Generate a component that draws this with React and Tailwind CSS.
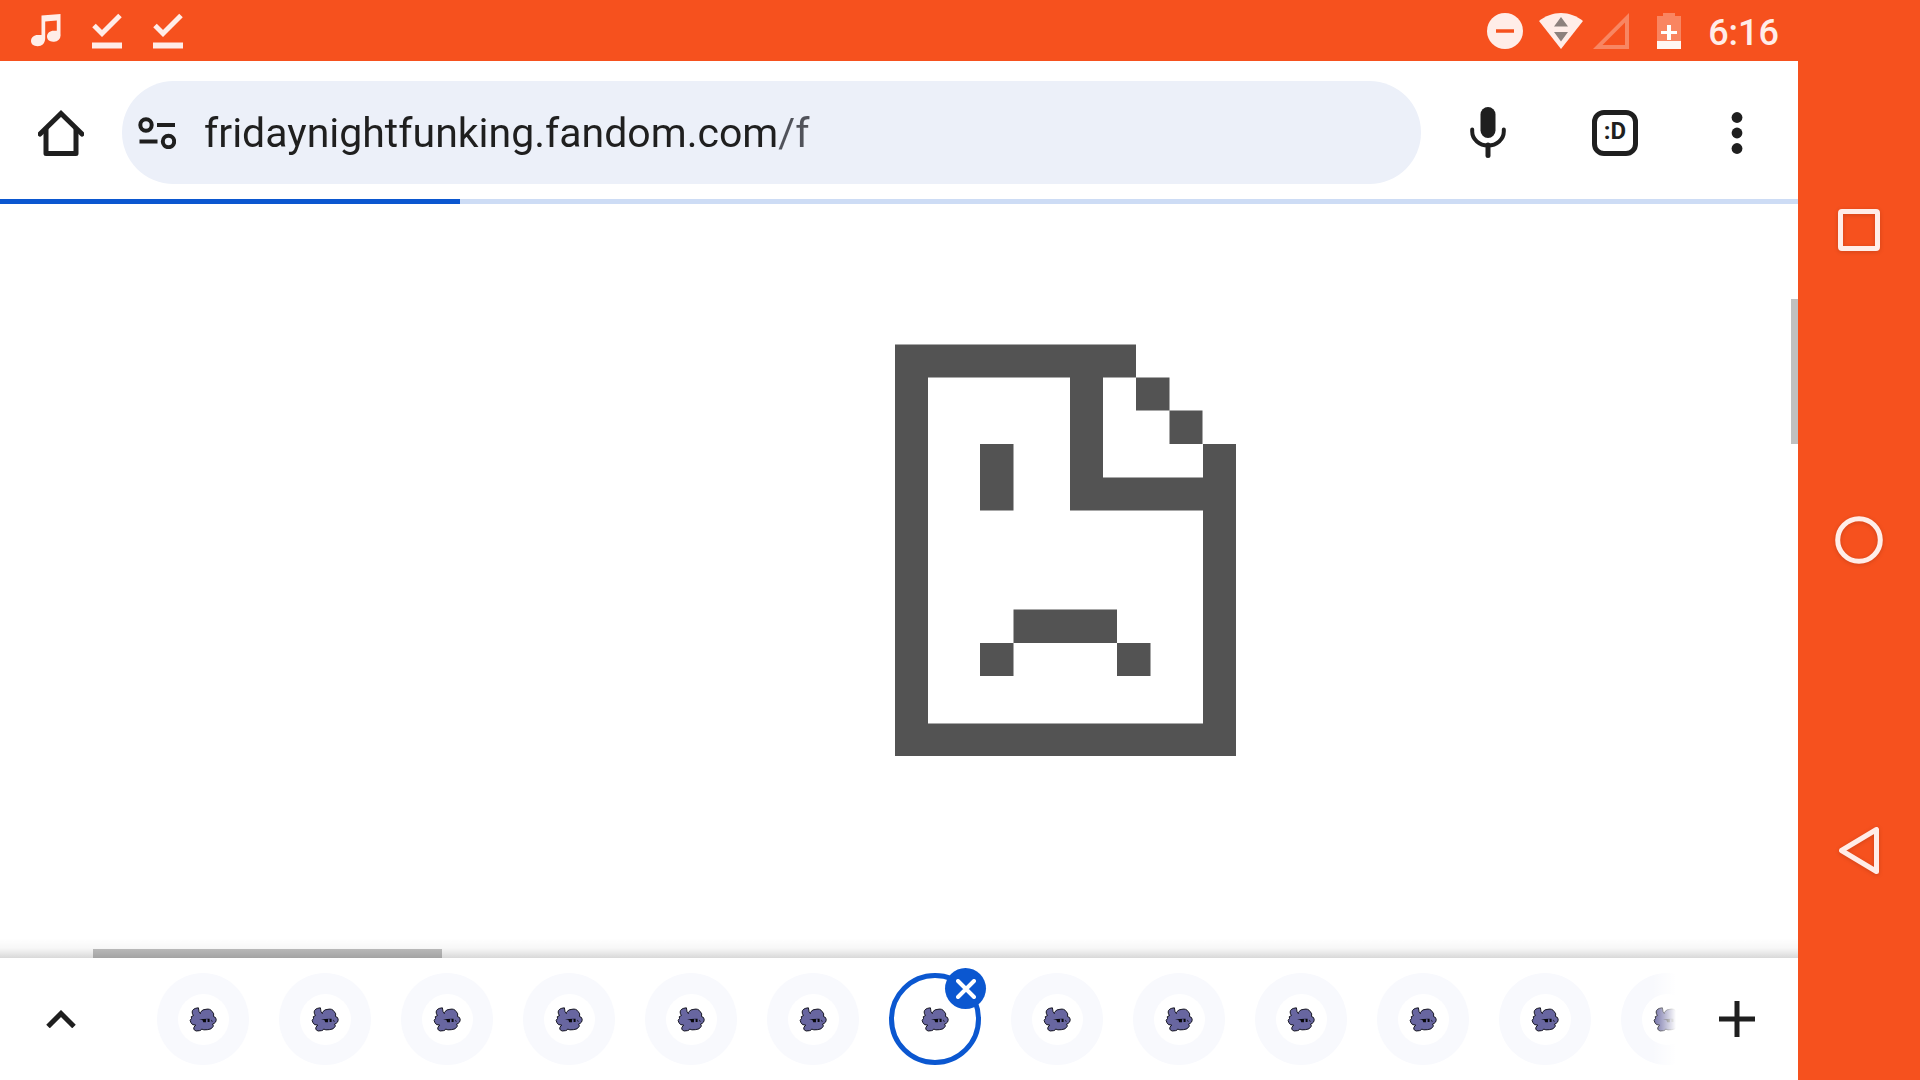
const TAB_COUNT = 13;
const ACTIVE_TAB = 6;
const LOAD_PROGRESS = 25.6;

function MusicIcon() {
  return (
    <svg viewBox="0 0 30 33" className="h-[33px] w-[30px]" fill="currentColor">
      <path d="M10.5 1.5 29.5 0v20a6.6 6.6 0 0 1-7.3 7.7c-4 0-6.2-2.2-6.2-5.2 0-3.5 3-5.8 6.6-5.8h3.2V6.6l-11.600 .9v16.700c0 5-3.2 8-7.6 8C2.400 32.200 0 30 0 27c0-3.600 3-6 6.600-6h3.900z" />
    </svg>
  );
}

function DownloadDoneIcon() {
  return (
    <svg viewBox="0 0 30 36" className="h-9 w-[30px]" fill="none" stroke="currentColor">
      <path d="M2 12.500 10 20.500 28 2.500" strokeWidth="5" />
      <path d="M0 32.500h30" strokeWidth="6" />
    </svg>
  );
}

function DoNotDisturbIcon() {
  return (
    <svg viewBox="0 0 36 36" className="size-9">
      <circle cx="18" cy="18" r="18" fill="#ffede8" />
      <path d="M9 18h18" stroke="#f6511e" strokeWidth="3.500" />
    </svg>
  );
}

function WifiIcon() {
  return (
    <svg viewBox="0 0 44 36" className="h-9 w-11">
      <path d="M0 8C6 3 14 0 22 0s16 3 22 8L22 36z" fill="#ffede8" />
      <path d="M15 13.500 22 4l7 9.500zM15 19h14l-7 9.500z" fill="#8d817d" />
    </svg>
  );
}

function SignalIcon() {
  return (
    <svg viewBox="0 0 36 36" className="size-9 opacity-30">
      <path d="M0 36 36 0v36zM9.500 32H32V9.500z" fill="#fff" fillRule="evenodd" />
    </svg>
  );
}

function BatteryIcon() {
  return (
    <svg viewBox="0 0 24 36" className="h-9 w-6" fill="#fff">
      <path d="M0 3h6V0h12v3h6v25H0z" opacity="0.300" />
      <path d="M10 12h4v6h6v3h-6v6h-4v-6H4v-3h6z" />
      <path d="M0 28h24v8H0z" opacity="0.950" />
    </svg>
  );
}

function StatusBar() {
  return (
    <header className="flex h-[61px] shrink-0 items-center justify-between pr-[19px] pl-[31px] text-[#ffede8]">
      <div className="flex items-center gap-[31px]">
        <MusicIcon />
        <DownloadDoneIcon />
        <DownloadDoneIcon />
      </div>
      <div className="flex items-center">
        <DoNotDisturbIcon />
        <div className="ml-4 flex items-center gap-[10px]">
          <WifiIcon />
          <SignalIcon />
        </div>
        <div className="ml-7 flex items-center gap-[27px]">
          <BatteryIcon />
          <time className="pt-1 text-[36px] leading-10 font-medium">6:16</time>
        </div>
      </div>
    </header>
  );
}

function HomeIcon() {
  return (
    <svg viewBox="0 0 46 46" className="size-[46px]" fill="none" stroke="currentColor" strokeWidth="5" strokeLinejoin="round">
      <path d="M2 24 23 3.500 44 24" strokeLinejoin="miter" strokeLinecap="round" />
      <path d="M8 18v25.500h30V18" />
    </svg>
  );
}

function SiteSettingsIcon() {
  return (
    <svg viewBox="0 0 38 32" className="h-8 w-[38px]" fill="none" stroke="currentColor" strokeWidth="4">
      <circle cx="8" cy="8" r="5.700" />
      <path d="M19 8h18M1.500 24.500h18" />
      <circle cx="30.500" cy="24.500" r="5.700" />
    </svg>
  );
}

function MicIcon() {
  return (
    <svg viewBox="0 0 36 52" className="h-[52px] w-9" fill="none" stroke="currentColor">
      <rect x="10.500" y="0" width="15" height="31" rx="7.500" fill="currentColor" stroke="none" />
      <path d="M2.200 22.500v2a15.800 14 0 0 0 31.600 0v-2" strokeWidth="4" strokeLinecap="round" />
      <path d="M18 38v10.500" strokeWidth="5" strokeLinecap="round" />
    </svg>
  );
}

function MenuDotsIcon() {
  return (
    <svg viewBox="0 0 12 42" className="h-[42px] w-3" fill="currentColor">
      <circle cx="6" cy="5.500" r="5.400" />
      <circle cx="6" cy="21" r="5.400" />
      <circle cx="6" cy="36.500" r="5.400" />
    </svg>
  );
}

function Toolbar() {
  return (
    <div className="flex h-[138px] shrink-0 items-center bg-white pt-[5px] text-[#1f1f1f]">
      <button type="button" aria-label="Home" className="flex h-full w-[122px] shrink-0 items-center justify-center">
        <HomeIcon />
      </button>
      <form className="flex h-[103px] min-w-0 flex-1 items-center rounded-full bg-[#ecf0f9] pl-4" onSubmit={(e) => e.preventDefault()}>
        <button type="button" aria-label="Site information" className="shrink-0">
          <SiteSettingsIcon />
        </button>
        {/* host is dark, the path after it is greyed */}
        <input
          type="text"
          aria-label="Address"
          defaultValue="fridaynightfunking.fandom.com/f"
          className="ml-7 h-16 min-w-0 flex-1 bg-linear-to-r from-[#1f1f1f] from-[574px] to-[#50525a] to-[574px] bg-clip-text text-[41px] text-transparent caret-black outline-none"
        />
      </form>
      <button type="button" aria-label="Voice search" className="flex h-full w-[133px] shrink-0 items-center justify-center">
        <MicIcon />
      </button>
      <button type="button" aria-label="Switch tabs" className="flex h-full w-[122px] shrink-0 items-center justify-center">
        <span className="flex size-[46px] items-center justify-center rounded-xl border-5 border-current pb-1 text-2xl leading-8 font-bold">
          :D
        </span>
      </button>
      <button type="button" aria-label="Menu" className="flex h-full w-[122px] shrink-0 items-center justify-center">
        <MenuDotsIcon />
      </button>
    </div>
  );
}

function SadPage() {
  return (
    <svg viewBox="0 0 341 412" className="h-[412px] w-[341px]" fill="#535353" role="img" aria-label="Page failed to load">
      <path
        fillRule="evenodd"
        d="M0 .500h241v33h33.500v33h33V100H341v312H0zM33 33.500V379.500h275V166.500H175V33.500zM208 33.500V133.500h100V100h-33.500V66.500H241v-33z"
      />
      <path d="M85 100h33.500v66.500H85zM118.500 265.500H222v33.500H118.500zM85 299h33.500v33H85zM222 299h33.500v33H222z" />
    </svg>
  );
}

function PageView() {
  return (
    <main className="relative min-h-0 flex-1 overflow-hidden bg-white pt-[140px]">
      <div className="ml-[49.8%]">
        <SadPage />
      </div>
      {/* scrollbars and the tab strip's shadow */}
      <div className="absolute top-[95px] right-0 h-[145px] w-[7px] bg-[#c0c0c0]" />
      <div className="absolute bottom-0 left-[93px] h-[9px] w-[349px] bg-[#c0c0c0]" />
      <div className="absolute inset-x-0 bottom-0 h-5 bg-linear-to-b from-transparent via-black/3 to-black/15" />
    </main>
  );
}

function CloudFavicon() {
  return (
    <svg viewBox="0 0 84 76" className="h-[25px] w-7">
      <path
        d="M28 2.500Q10 4 9 15Q9 21 13 26Q3 28 7 35Q0 40 5 47Q8 56 20 55Q12 61 14 68Q19 76 31 72Q36 72 38 67Q43 71 55 69Q68 69 73 59Q74 55 71 52Q83 48 82 37Q81 30 74 29Q77 20 70 14Q64 4 51 7Q41 7 36 14Q33 16 34 20Q29 17 28 2.500Z"
        fill="#6866a0"
        stroke="#0b0b14"
        strokeWidth="2.800"
        strokeLinejoin="round"
      />
      <path d="M30 38.500Q42 35 62 35.500v10h-6v-8h-5v9h-8l-3-7z" fill="#08080c" />
      <path d="M67 40Q70 41 70 45" fill="none" stroke="#0b0b14" strokeWidth="2.500" />
    </svg>
  );
}

function TabItem({ active }) {
  return (
    <li className="flex w-[122px] shrink-0 justify-center">
      <div className="relative">
        <button
          type="button"
          aria-label="Friday Night Funkin' tab"
          className={
            active
              ? "flex size-[92px] items-center justify-center rounded-full border-5 border-[#0b57d0] bg-white"
              : "flex size-[92px] items-center justify-center rounded-full bg-[#f8f9fd]"
          }
        >
          <span className="flex size-[51px] items-center justify-center rounded-full bg-white">
            <CloudFavicon />
          </span>
        </button>
        {active && (
          <button
            type="button"
            aria-label="Close tab"
            className="absolute -top-[5px] -right-[5px] flex size-[41px] items-center justify-center rounded-full bg-[#0b57d0] text-white"
          >
            <svg viewBox="0 0 20 20" className="size-5" stroke="currentColor" strokeWidth="4" strokeLinecap="round">
              <path d="M2 2l16 16M18 2 2 18" />
            </svg>
          </button>
        )}
      </div>
    </li>
  );
}

function TabStrip() {
  return (
    <footer className="flex h-[122px] shrink-0 items-center bg-white text-[#1f1f1f]">
      <button type="button" aria-label="Show all tabs" className="flex h-full w-[122px] shrink-0 items-center justify-center">
        <svg viewBox="0 0 30 18" className="h-[18px] w-[30px]" fill="none" stroke="currentColor" strokeWidth="5">
          <path d="M2 16.500 15 3.500l13 13" />
        </svg>
      </button>
      <div className="relative h-full min-w-0 flex-1 overflow-hidden">
        <ul className="flex h-full items-center pl-5">
          {Array.from({ length: TAB_COUNT }, (_, i) => (
            <TabItem key={i} active={i === ACTIVE_TAB} />
          ))}
        </ul>
        <div className="pointer-events-none absolute inset-y-0 right-0 w-6 bg-linear-to-r from-transparent to-white" />
      </div>
      <button type="button" aria-label="New tab" className="flex h-full w-[122px] shrink-0 items-center justify-center">
        <svg viewBox="0 0 36 36" className="size-9" stroke="currentColor" strokeWidth="5">
          <path d="M18 0v36M0 18h36" />
        </svg>
      </button>
    </footer>
  );
}

function NavBar() {
  return (
    <nav className="flex w-[122px] shrink-0 flex-col items-center justify-center gap-[262px] text-[#ffede8]">
      <button type="button" aria-label="Recent apps">
        <svg viewBox="0 0 48 48" className="size-12 drop-shadow-sm" fill="none" stroke="currentColor" strokeWidth="5">
          <rect x="5.500" y="5.500" width="37" height="37" rx="1.500" />
        </svg>
      </button>
      <button type="button" aria-label="Home screen">
        <svg viewBox="0 0 48 48" className="size-12 drop-shadow-sm" fill="none" stroke="currentColor" strokeWidth="5">
          <circle cx="24" cy="24" r="21.300" />
        </svg>
      </button>
      <button type="button" aria-label="Back">
        <svg viewBox="0 0 48 48" className="size-12 drop-shadow-sm" fill="none" stroke="currentColor" strokeWidth="5" strokeLinejoin="round">
          <path d="M6.500 24.500 41.500 3.500v42z" />
        </svg>
      </button>
    </nav>
  );
}

export default function App() {
  return (
    <div className="flex h-screen overflow-hidden bg-[#f6511e] font-[Roboto,sans-serif]">
      <div className="flex min-w-0 flex-1 flex-col">
        <StatusBar />
        <Toolbar />
        <div
          role="progressbar"
          aria-label="Page loading"
          aria-valuenow={LOAD_PROGRESS}
          className="h-[5px] shrink-0 bg-[#cddcf5]"
        >
          <div className="h-full bg-[#0b57d0]" style={{ width: `${LOAD_PROGRESS}%` }} />
        </div>
        <PageView />
        <TabStrip />
      </div>
      <NavBar />
    </div>
  );
}
